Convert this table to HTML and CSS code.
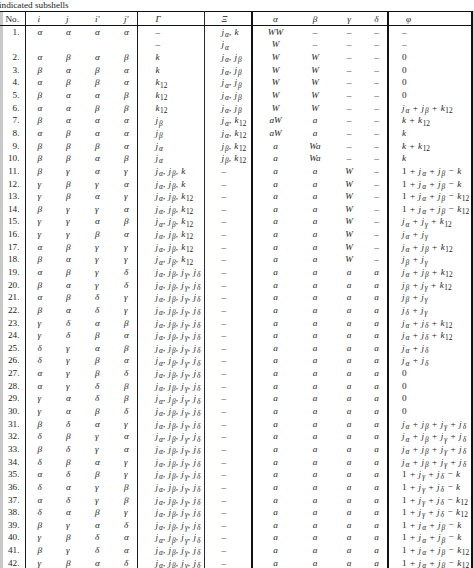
FILE: index.html
```html
<!DOCTYPE html>
<html>
<head>
<meta charset="utf-8">
<link rel="stylesheet" href="styles.css">
</head>
<body>
<div class="caption">indicated subshells</div>
<div class="sheet">
<table class="tbl">
<colgroup>
<col class="w-no"><col class="w-i"><col class="w-j"><col class="w-ip"><col class="w-jp"><col class="w-gam"><col class="w-xi"><col class="w-al"><col class="w-be"><col class="w-ga"><col class="w-de"><col class="w-phi">
</colgroup>
<thead>
<tr><th>No.</th><th>i</th><th>j</th><th>i′</th><th>j′</th><th>Γ</th><th>Ξ</th><th>α</th><th>β</th><th>γ</th><th>δ</th><th>φ</th></tr>
</thead>
<tbody>
<tr><td>1.</td><td>α</td><td>α</td><td>α</td><td>α</td><td>–</td><td><i>j<sub>α</sub></i>, <i>k</i></td><td>WW</td><td>–</td><td>–</td><td>–</td><td>–</td></tr>
<tr><td></td><td></td><td></td><td></td><td></td><td>–</td><td><i>j<sub>α</sub></i></td><td>W</td><td>–</td><td>–</td><td>–</td><td>–</td></tr>
<tr><td>2.</td><td>α</td><td>β</td><td>α</td><td>β</td><td><i>k</i></td><td><i>j<sub>α</sub></i>, <i>j<sub>β</sub></i></td><td>W</td><td>W</td><td>–</td><td>–</td><td>0</td></tr>
<tr><td>3.</td><td>β</td><td>α</td><td>β</td><td>α</td><td><i>k</i></td><td><i>j<sub>α</sub></i>, <i>j<sub>β</sub></i></td><td>W</td><td>W</td><td>–</td><td>–</td><td>0</td></tr>
<tr><td>4.</td><td>α</td><td>β</td><td>β</td><td>α</td><td><i>k</i><sub>12</sub></td><td><i>j<sub>α</sub></i>, <i>j<sub>β</sub></i></td><td>W</td><td>W</td><td>–</td><td>–</td><td>0</td></tr>
<tr><td>5.</td><td>β</td><td>α</td><td>α</td><td>β</td><td><i>k</i><sub>12</sub></td><td><i>j<sub>α</sub></i>, <i>j<sub>β</sub></i></td><td>W</td><td>W</td><td>–</td><td>–</td><td>0</td></tr>
<tr><td>6.</td><td>α</td><td>α</td><td>β</td><td>β</td><td><i>k</i><sub>12</sub></td><td><i>j<sub>α</sub></i>, <i>j<sub>β</sub></i></td><td>W</td><td>W</td><td>–</td><td>–</td><td><i>j<sub>α</sub></i> + <i>j<sub>β</sub></i> + <i>k</i><sub>12</sub></td></tr>
<tr><td>7.</td><td>β</td><td>α</td><td>α</td><td>α</td><td><i>j<sub>β</sub></i></td><td><i>j<sub>α</sub></i>, <i>k</i><sub>12</sub></td><td>aW</td><td>a</td><td>–</td><td>–</td><td><i>k</i> + <i>k</i><sub>12</sub></td></tr>
<tr><td>8.</td><td>α</td><td>β</td><td>α</td><td>α</td><td><i>j<sub>β</sub></i></td><td><i>j<sub>α</sub></i>, <i>k</i><sub>12</sub></td><td>aW</td><td>a</td><td>–</td><td>–</td><td><i>k</i></td></tr>
<tr><td>9.</td><td>β</td><td>β</td><td>β</td><td>α</td><td><i>j<sub>α</sub></i></td><td><i>j<sub>β</sub></i>, <i>k</i><sub>12</sub></td><td>a</td><td>Wa</td><td>–</td><td>–</td><td><i>k</i> + <i>k</i><sub>12</sub></td></tr>
<tr><td>10.</td><td>β</td><td>β</td><td>α</td><td>β</td><td><i>j<sub>α</sub></i></td><td><i>j<sub>β</sub></i>, <i>k</i><sub>12</sub></td><td>a</td><td>Wa</td><td>–</td><td>–</td><td><i>k</i></td></tr>
<tr><td>11.</td><td>β</td><td>γ</td><td>α</td><td>γ</td><td><i>j<sub>α</sub></i>, <i>j<sub>β</sub></i>, <i>k</i></td><td>–</td><td>a</td><td>a</td><td>W</td><td>–</td><td>1 + <i>j<sub>α</sub></i> + <i>j<sub>β</sub></i> − <i>k</i></td></tr>
<tr><td>12.</td><td>γ</td><td>β</td><td>γ</td><td>α</td><td><i>j<sub>α</sub></i>, <i>j<sub>β</sub></i>, <i>k</i></td><td>–</td><td>a</td><td>a</td><td>W</td><td>–</td><td>1 + <i>j<sub>α</sub></i> + <i>j<sub>β</sub></i> − <i>k</i></td></tr>
<tr><td>13.</td><td>γ</td><td>β</td><td>α</td><td>γ</td><td><i>j<sub>α</sub></i>, <i>j<sub>β</sub></i>, <i>k</i><sub>12</sub></td><td>–</td><td>a</td><td>a</td><td>W</td><td>–</td><td>1 + <i>j<sub>α</sub></i> + <i>j<sub>β</sub></i> − <i>k</i><sub>12</sub></td></tr>
<tr><td>14.</td><td>β</td><td>γ</td><td>γ</td><td>α</td><td><i>j<sub>α</sub></i>, <i>j<sub>β</sub></i>, <i>k</i><sub>12</sub></td><td>–</td><td>a</td><td>a</td><td>W</td><td>–</td><td>1 + <i>j<sub>α</sub></i> + <i>j<sub>β</sub></i> − <i>k</i><sub>12</sub></td></tr>
<tr><td>15.</td><td>γ</td><td>γ</td><td>α</td><td>β</td><td><i>j<sub>α</sub></i>, <i>j<sub>β</sub></i>, <i>k</i><sub>12</sub></td><td>–</td><td>a</td><td>a</td><td>W</td><td>–</td><td><i>j<sub>α</sub></i> + <i>j<sub>γ</sub></i> + <i>k</i><sub>12</sub></td></tr>
<tr><td>16.</td><td>γ</td><td>γ</td><td>β</td><td>α</td><td><i>j<sub>α</sub></i>, <i>j<sub>β</sub></i>, <i>k</i><sub>12</sub></td><td>–</td><td>a</td><td>a</td><td>W</td><td>–</td><td><i>j<sub>α</sub></i> + <i>j<sub>γ</sub></i></td></tr>
<tr><td>17.</td><td>α</td><td>β</td><td>γ</td><td>γ</td><td><i>j<sub>α</sub></i>, <i>j<sub>β</sub></i>, <i>k</i><sub>12</sub></td><td>–</td><td>a</td><td>a</td><td>W</td><td>–</td><td><i>j<sub>α</sub></i> + <i>j<sub>β</sub></i> + <i>k</i><sub>12</sub></td></tr>
<tr><td>18.</td><td>β</td><td>α</td><td>γ</td><td>γ</td><td><i>j<sub>α</sub></i>, <i>j<sub>β</sub></i>, <i>k</i><sub>12</sub></td><td>–</td><td>a</td><td>a</td><td>W</td><td>–</td><td><i>j<sub>β</sub></i> + <i>j<sub>γ</sub></i></td></tr>
<tr><td>19.</td><td>α</td><td>β</td><td>γ</td><td>δ</td><td><i>j<sub>α</sub></i>, <i>j<sub>β</sub></i>, <i>j<sub>γ</sub></i>, <i>j<sub>δ</sub></i></td><td>–</td><td>a</td><td>a</td><td>a</td><td>a</td><td><i>j<sub>α</sub></i> + <i>j<sub>β</sub></i> + <i>k</i><sub>12</sub></td></tr>
<tr><td>20.</td><td>β</td><td>α</td><td>γ</td><td>δ</td><td><i>j<sub>α</sub></i>, <i>j<sub>β</sub></i>, <i>j<sub>γ</sub></i>, <i>j<sub>δ</sub></i></td><td>–</td><td>a</td><td>a</td><td>a</td><td>a</td><td><i>j<sub>β</sub></i> + <i>j<sub>γ</sub></i> + <i>k</i><sub>12</sub></td></tr>
<tr><td>21.</td><td>α</td><td>β</td><td>δ</td><td>γ</td><td><i>j<sub>α</sub></i>, <i>j<sub>β</sub></i>, <i>j<sub>γ</sub></i>, <i>j<sub>δ</sub></i></td><td>–</td><td>a</td><td>a</td><td>a</td><td>a</td><td><i>j<sub>β</sub></i> + <i>j<sub>γ</sub></i></td></tr>
<tr><td>22.</td><td>β</td><td>α</td><td>δ</td><td>γ</td><td><i>j<sub>α</sub></i>, <i>j<sub>β</sub></i>, <i>j<sub>γ</sub></i>, <i>j<sub>δ</sub></i></td><td>–</td><td>a</td><td>a</td><td>a</td><td>a</td><td><i>j<sub>δ</sub></i> + <i>j<sub>γ</sub></i></td></tr>
<tr><td>23.</td><td>γ</td><td>δ</td><td>α</td><td>β</td><td><i>j<sub>α</sub></i>, <i>j<sub>β</sub></i>, <i>j<sub>γ</sub></i>, <i>j<sub>δ</sub></i></td><td>–</td><td>a</td><td>a</td><td>a</td><td>a</td><td><i>j<sub>α</sub></i> + <i>j<sub>δ</sub></i> + <i>k</i><sub>12</sub></td></tr>
<tr><td>24.</td><td>γ</td><td>δ</td><td>β</td><td>α</td><td><i>j<sub>α</sub></i>, <i>j<sub>β</sub></i>, <i>j<sub>γ</sub></i>, <i>j<sub>δ</sub></i></td><td>–</td><td>a</td><td>a</td><td>a</td><td>a</td><td><i>j<sub>α</sub></i> + <i>j<sub>δ</sub></i> + <i>k</i><sub>12</sub></td></tr>
<tr><td>25.</td><td>δ</td><td>γ</td><td>α</td><td>β</td><td><i>j<sub>α</sub></i>, <i>j<sub>β</sub></i>, <i>j<sub>γ</sub></i>, <i>j<sub>δ</sub></i></td><td>–</td><td>a</td><td>a</td><td>a</td><td>a</td><td><i>j<sub>α</sub></i> + <i>j<sub>δ</sub></i></td></tr>
<tr><td>26.</td><td>δ</td><td>γ</td><td>β</td><td>α</td><td><i>j<sub>α</sub></i>, <i>j<sub>β</sub></i>, <i>j<sub>γ</sub></i>, <i>j<sub>δ</sub></i></td><td>–</td><td>a</td><td>a</td><td>a</td><td>a</td><td><i>j<sub>α</sub></i> + <i>j<sub>δ</sub></i></td></tr>
<tr><td>27.</td><td>α</td><td>γ</td><td>β</td><td>δ</td><td><i>j<sub>α</sub></i>, <i>j<sub>β</sub></i>, <i>j<sub>γ</sub></i>, <i>j<sub>δ</sub></i></td><td>–</td><td>a</td><td>a</td><td>a</td><td>a</td><td>0</td></tr>
<tr><td>28.</td><td>α</td><td>γ</td><td>δ</td><td>β</td><td><i>j<sub>α</sub></i>, <i>j<sub>β</sub></i>, <i>j<sub>γ</sub></i>, <i>j<sub>δ</sub></i></td><td>–</td><td>a</td><td>a</td><td>a</td><td>a</td><td>0</td></tr>
<tr><td>29.</td><td>γ</td><td>α</td><td>δ</td><td>β</td><td><i>j<sub>α</sub></i>, <i>j<sub>β</sub></i>, <i>j<sub>γ</sub></i>, <i>j<sub>δ</sub></i></td><td>–</td><td>a</td><td>a</td><td>a</td><td>a</td><td>0</td></tr>
<tr><td>30.</td><td>γ</td><td>α</td><td>β</td><td>δ</td><td><i>j<sub>α</sub></i>, <i>j<sub>β</sub></i>, <i>j<sub>γ</sub></i>, <i>j<sub>δ</sub></i></td><td>–</td><td>a</td><td>a</td><td>a</td><td>a</td><td>0</td></tr>
<tr><td>31.</td><td>β</td><td>δ</td><td>α</td><td>γ</td><td><i>j<sub>α</sub></i>, <i>j<sub>β</sub></i>, <i>j<sub>γ</sub></i>, <i>j<sub>δ</sub></i></td><td>–</td><td>a</td><td>a</td><td>a</td><td>a</td><td><i>j<sub>α</sub></i> + <i>j<sub>β</sub></i> + <i>j<sub>γ</sub></i> + <i>j<sub>δ</sub></i></td></tr>
<tr><td>32.</td><td>δ</td><td>β</td><td>γ</td><td>α</td><td><i>j<sub>α</sub></i>, <i>j<sub>β</sub></i>, <i>j<sub>γ</sub></i>, <i>j<sub>δ</sub></i></td><td>–</td><td>a</td><td>a</td><td>a</td><td>a</td><td><i>j<sub>α</sub></i> + <i>j<sub>β</sub></i> + <i>j<sub>γ</sub></i> + <i>j<sub>δ</sub></i></td></tr>
<tr><td>33.</td><td>β</td><td>δ</td><td>γ</td><td>α</td><td><i>j<sub>α</sub></i>, <i>j<sub>β</sub></i>, <i>j<sub>γ</sub></i>, <i>j<sub>δ</sub></i></td><td>–</td><td>a</td><td>a</td><td>a</td><td>a</td><td><i>j<sub>α</sub></i> + <i>j<sub>β</sub></i> + <i>j<sub>γ</sub></i> + <i>j<sub>δ</sub></i></td></tr>
<tr><td>34.</td><td>δ</td><td>β</td><td>α</td><td>γ</td><td><i>j<sub>α</sub></i>, <i>j<sub>β</sub></i>, <i>j<sub>γ</sub></i>, <i>j<sub>δ</sub></i></td><td>–</td><td>a</td><td>a</td><td>a</td><td>a</td><td><i>j<sub>α</sub></i> + <i>j<sub>β</sub></i> + <i>j<sub>γ</sub></i> + <i>j<sub>δ</sub></i></td></tr>
<tr><td>35.</td><td>α</td><td>δ</td><td>β</td><td>γ</td><td><i>j<sub>α</sub></i>, <i>j<sub>β</sub></i>, <i>j<sub>γ</sub></i>, <i>j<sub>δ</sub></i></td><td>–</td><td>a</td><td>a</td><td>a</td><td>a</td><td>1 + <i>j<sub>γ</sub></i> + <i>j<sub>δ</sub></i> − <i>k</i></td></tr>
<tr><td>36.</td><td>δ</td><td>α</td><td>γ</td><td>β</td><td><i>j<sub>α</sub></i>, <i>j<sub>β</sub></i>, <i>j<sub>γ</sub></i>, <i>j<sub>δ</sub></i></td><td>–</td><td>a</td><td>a</td><td>a</td><td>a</td><td>1 + <i>j<sub>γ</sub></i> + <i>j<sub>δ</sub></i> − <i>k</i></td></tr>
<tr><td>37.</td><td>α</td><td>δ</td><td>γ</td><td>β</td><td><i>j<sub>α</sub></i>, <i>j<sub>β</sub></i>, <i>j<sub>γ</sub></i>, <i>j<sub>δ</sub></i></td><td>–</td><td>a</td><td>a</td><td>a</td><td>a</td><td>1 + <i>j<sub>γ</sub></i> + <i>j<sub>δ</sub></i> − <i>k</i><sub>12</sub></td></tr>
<tr><td>38.</td><td>δ</td><td>α</td><td>β</td><td>γ</td><td><i>j<sub>α</sub></i>, <i>j<sub>β</sub></i>, <i>j<sub>γ</sub></i>, <i>j<sub>δ</sub></i></td><td>–</td><td>a</td><td>a</td><td>a</td><td>a</td><td>1 + <i>j<sub>γ</sub></i> + <i>j<sub>δ</sub></i> − <i>k</i><sub>12</sub></td></tr>
<tr><td>39.</td><td>β</td><td>γ</td><td>α</td><td>δ</td><td><i>j<sub>α</sub></i>, <i>j<sub>β</sub></i>, <i>j<sub>γ</sub></i>, <i>j<sub>δ</sub></i></td><td>–</td><td>a</td><td>a</td><td>a</td><td>a</td><td>1 + <i>j<sub>α</sub></i> + <i>j<sub>β</sub></i> − <i>k</i></td></tr>
<tr><td>40.</td><td>γ</td><td>β</td><td>δ</td><td>α</td><td><i>j<sub>α</sub></i>, <i>j<sub>β</sub></i>, <i>j<sub>γ</sub></i>, <i>j<sub>δ</sub></i></td><td>–</td><td>a</td><td>a</td><td>a</td><td>a</td><td>1 + <i>j<sub>α</sub></i> + <i>j<sub>β</sub></i> − <i>k</i></td></tr>
<tr><td>41.</td><td>β</td><td>γ</td><td>δ</td><td>α</td><td><i>j<sub>α</sub></i>, <i>j<sub>β</sub></i>, <i>j<sub>γ</sub></i>, <i>j<sub>δ</sub></i></td><td>–</td><td>a</td><td>a</td><td>a</td><td>a</td><td>1 + <i>j<sub>α</sub></i> + <i>j<sub>β</sub></i> − <i>k</i><sub>12</sub></td></tr>
<tr><td>42.</td><td>γ</td><td>β</td><td>α</td><td>δ</td><td><i>j<sub>α</sub></i>, <i>j<sub>β</sub></i>, <i>j<sub>γ</sub></i>, <i>j<sub>δ</sub></i></td><td>–</td><td>a</td><td>a</td><td>a</td><td>a</td><td>1 + <i>j<sub>α</sub></i> + <i>j<sub>β</sub></i> − <i>k</i><sub>12</sub></td></tr>
</tbody>
</table>
</div>
</body>
</html>
```

FILE: styles.css
```css
html, body {
  margin: 0;
  padding: 0;
  background: #fff;
}
body {
  font-family: "Liberation Serif", "Times New Roman", serif;
  font-size: 9.2px;
  color: #1c1c1c;
  overflow: hidden;
}
.caption {
  height: 11px;
  line-height: 11px;
  white-space: nowrap;
  margin-left: -1px;
}
.sheet {
  background:
    linear-gradient(to right, #c8c8c8 0, #c8c8c8 3px, transparent 3px),
    linear-gradient(to left, #d6d6d6 0, #d6d6d6 2px, transparent 2px);
  width: 474px;
  height: 557px;
}
.tbl {
  border-collapse: collapse;
  table-layout: fixed;
  width: 472px;
}
.w-no { width: 25px; }
.w-i { width: 29px; }
.w-j { width: 29px; }
.w-ip { width: 29px; }
.w-jp { width: 25px; }
.w-gam { width: 67px; }
.w-xi { width: 48px; }
.w-al { width: 46px; }
.w-be { width: 34px; }
.w-ga { width: 34px; }
.w-de { width: 22px; }
.w-phi { width: 84px; }

.tbl th, .tbl td {
  padding: 0;
  line-height: 12px;
  white-space: nowrap;
  overflow: visible;
  font-weight: normal;
  vertical-align: middle;
}
.tbl thead th {
  border-top: 1px solid #111;
  border-bottom: 1px solid #111;
  height: 13px;
  font-style: italic;
}
.tbl thead th:first-child {
  font-style: normal;
  text-align: center;
}
.tbl tbody tr {
  height: 12.65px;
}
/* column alignment */
.tbl tr > :nth-child(1) { text-align: right; padding-right: 5px; border-right: 1px solid #1a1a1a; }
.tbl thead tr > :nth-child(1) { text-align: center; padding-right: 0; }
.tbl tr > :nth-child(2),
.tbl tr > :nth-child(3),
.tbl tr > :nth-child(4),
.tbl tr > :nth-child(5) { text-align: left; padding-left: 12px; font-style: italic; }
.tbl tr > :nth-child(5) { border-right: 1px solid #1a1a1a; }
.tbl tr > :nth-child(6) { text-align: left; padding-left: 18px; border-right: 1px solid #2a2a2a; word-spacing: 1px; }
.tbl tr > :nth-child(7) { text-align: left; padding-left: 17px; border-right: 2px solid #111; word-spacing: 1px; }
.tbl tr > :nth-child(8),
.tbl tr > :nth-child(9),
.tbl tr > :nth-child(10),
.tbl tr > :nth-child(11) { text-align: center; font-style: italic; }
.tbl tr > :nth-child(11) { border-right: 2px solid #111; }
.tbl tr > :nth-child(12) { text-align: left; padding-left: 13px; border-right: 2px solid #111; word-spacing: 1.1px; }
.tbl thead tr > :nth-child(12) { padding-left: 17px; }

.tbl sub {
  font-size: 0.8em;
  vertical-align: -0.3em;
  line-height: 0;
  margin-left: 0.5px;
}
.tbl i sub {
  margin-left: 1px;
}
```
